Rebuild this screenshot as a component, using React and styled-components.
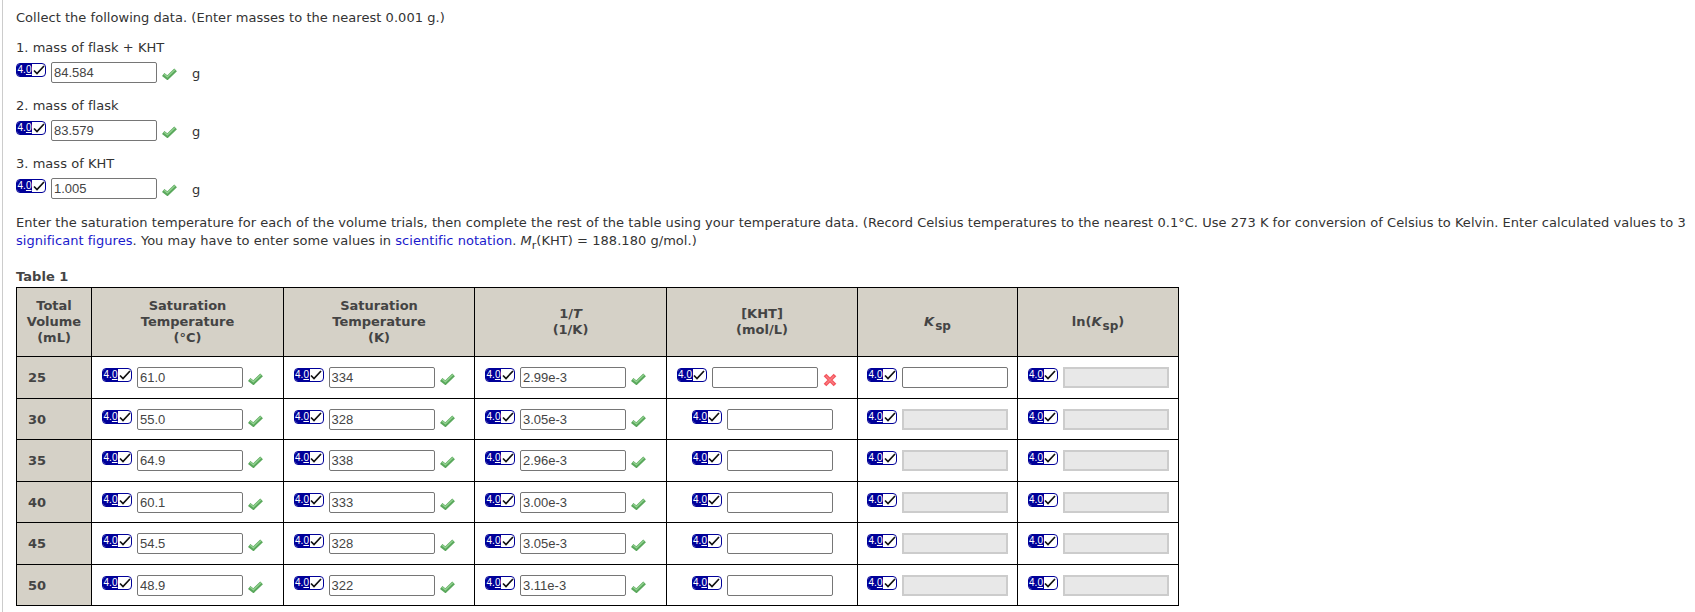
import React from 'react'
import styled, { createGlobalStyle } from 'styled-components'

const GlobalStyle = createGlobalStyle`
    html, body {
        margin: 0;
        padding: 0;
        background: #fff;
    }
`

const rows = [
    { vol: 25, c: '61.0', k: '334', inv: '2.99e-3', wrong: true },
    { vol: 30, c: '55.0', k: '328', inv: '3.05e-3' },
    { vol: 35, c: '64.9', k: '338', inv: '2.96e-3' },
    { vol: 40, c: '60.1', k: '333', inv: '3.00e-3' },
    { vol: 45, c: '54.5', k: '328', inv: '3.05e-3' },
    { vol: 50, c: '48.9', k: '322', inv: '3.11e-3' },
]

const masses = [
    { label: '1. mass of flask + KHT', value: '84.584' },
    { label: '2. mass of flask', value: '83.579' },
    { label: '3. mass of KHT', value: '1.005' },
]

function Badge() {
    return (
        <BadgeWrap>
            <BadgeScore>4.<u>0</u></BadgeScore>
            <BadgeTick>
                <svg width="12" height="10" viewBox="0 0 12 10">
                    <path d="M1 5.5 L4 8.5 L11 1" fill="none" stroke="#111" strokeWidth="1.7" />
                </svg>
            </BadgeTick>
        </BadgeWrap>
    )
}

function Correct() {
    return (
        <StatusIcon>
            <svg width="15" height="12" viewBox="0 0 15 12">
                <path d="M1.2 6.4 L5.4 9.8 L13.6 1.8" fill="none" stroke="#5aa85c" strokeWidth="3.8" />
                <path d="M2.2 6.2 L5.4 8.8 L13 1.6" fill="none" stroke="#93d291" strokeWidth="1.3" />
            </svg>
        </StatusIcon>
    )
}

function Wrong() {
    return (
        <StatusIcon>
            <svg width="14" height="14" viewBox="0 0 14 14">
                <path d="M2 2 L12 12 M12 2 L2 12" fill="none" stroke="#f4565e" strokeWidth="3.8" />
                <path d="M3 3 L11 11 M11 3 L3 11" fill="none" stroke="#fb7d82" strokeWidth="1.2" />
            </svg>
        </StatusIcon>
    )
}

function Answer({ value, status, disabled }) {
    return (
        <AnswerWrap>
            <Badge />
            <Field value={value || ''} disabled={disabled} readOnly />
            {status === 'ok' && <Correct />}
            {status === 'bad' && <Wrong />}
        </AnswerWrap>
    )
}

export default function App() {
    return (
        <Page>
            <GlobalStyle />
            <Text>Collect the following data. (Enter masses to the nearest 0.001 g.)</Text>
            {masses.map(m => (
                <MassGroup key={m.label}>
                    <Text>{m.label}</Text>
                    <MassRow>
                        <Answer value={m.value} status="ok" />
                        <Unit>g</Unit>
                    </MassRow>
                </MassGroup>
            ))}
            <Intro>
                Enter the saturation temperature for each of the volume trials, then complete the rest of the table using your temperature data. (Record Celsius temperatures to the nearest 0.1°C. Use 273 K for conversion of Celsius to Kelvin. Enter calculated values to 3
                <br />
                <a href="#sig">significant figures</a>. You may have to enter some values in <a href="#sci">scientific notation</a>. <i>M</i><sub>r</sub>(KHT) = 188.180 g/mol.)
            </Intro>
            <Caption>Table 1</Caption>
            <DataTable>
                <colgroup>
                    <Col $w={75} />
                    <Col $w={192} />
                    <Col $w={191} />
                    <Col $w={192} />
                    <Col $w={191} />
                    <Col $w={160} />
                    <Col $w={161} />
                </colgroup>
                <thead>
                    <tr>
                        <Head>Total<br />Volume<br />(mL)</Head>
                        <Head>Saturation<br />Temperature<br />(°C)</Head>
                        <Head>Saturation<br />Temperature<br />(K)</Head>
                        <Head>1/<i>T</i><br />(1/K)</Head>
                        <Head>[KHT]<br />(mol/L)</Head>
                        <Head><i>K</i><sub>sp</sub></Head>
                        <Head>ln(<i>K</i><sub>sp</sub>)</Head>
                    </tr>
                </thead>
                <tbody>
                    {rows.map(r => (
                        <BodyRow key={r.vol}>
                            <RowHead>{r.vol}</RowHead>
                            <Cell><Answer value={r.c} status="ok" /></Cell>
                            <Cell><Answer value={r.k} status="ok" /></Cell>
                            <Cell><Answer value={r.inv} status="ok" /></Cell>
                            <Cell><Answer status={r.wrong ? 'bad' : null} /></Cell>
                            <Cell><Answer disabled={!r.wrong} /></Cell>
                            <Cell><Answer disabled /></Cell>
                        </BodyRow>
                    ))}
                </tbody>
            </DataTable>
        </Page>
    )
}

const Page = styled.div`
    box-sizing: border-box;
    height: 612px;
    overflow: hidden;
    margin-left: 2px;
    border-left: 1px solid #ccc;
    padding: 9px 0 0 13px;
    font-family: "DejaVu Sans", Verdana, sans-serif;
    font-size: 13px;
    line-height: 17px;
    letter-spacing: 0.04px;
    color: #333;
`

const Text = styled.div`
    white-space: nowrap;
`

const MassGroup = styled.div`
    margin-top: 13px;
    & + & {
        margin-top: 14px;
    }
`

const MassRow = styled.div`
    display: flex;
    align-items: center;
    margin-top: 6px;
`

const Unit = styled.span`
    margin-left: 5px;
    position: relative;
    top: 1px;
`

const Intro = styled.div`
    margin-top: 15px;
    white-space: nowrap;
    line-height: 18px;

    a {
        color: #1a1acc;
        text-decoration: none;
    }
    sub {
        font-size: 11px;
        line-height: 0;
    }
`

const Caption = styled.div`
    margin-top: 19px;
    font-weight: bold;
    font-size: 13px;
    line-height: 16px;
    color: #444;
`

const DataTable = styled.table`
    border-collapse: collapse;
    table-layout: fixed;
    width: 1162px;
    margin-top: 2px;
    letter-spacing: 0;
`

const Col = styled.col`
    width: ${p => p.$w}px;
`

const Head = styled.th`
    height: 68px;
    padding: 0;
    border: 1px solid #000;
    background: #d5d1c7;
    color: #444;
    font-size: 13px;
    line-height: 16px;
    font-weight: bold;
    text-align: center;

    sub {
        margin-left: 1px;
        font-size: 12px;
        line-height: 0;
    }
`

const BodyRow = styled.tr`
    & > * {
        height: 40px;
    }
    &:nth-child(odd) > * {
        height: 41px;
    }
`

const RowHead = styled.th`
    padding: 0 0 0 11px;
    border: 1px solid #000;
    background: #d5d1c7;
    color: #444;
    font-size: 13px;
    font-weight: bold;
    text-align: left;
`

const Cell = styled.td`
    padding: 0;
    border: 1px solid #000;
    text-align: center;
`

const AnswerWrap = styled.span`
    display: inline-flex;
    align-items: flex-start;
    vertical-align: middle;
    text-align: left;
`

const BadgeWrap = styled.span`
    display: inline-flex;
    box-sizing: border-box;
    width: 30px;
    height: 14px;
    margin-top: 1px;
    border: 1px solid #000099;
    border-radius: 4px;
    background: #fff;
    overflow: hidden;
`

const BadgeScore = styled.span`
    width: 15px;
    background: #000099;
    color: #fff;
    font-family: "Liberation Sans", Arial, sans-serif;
    font-size: 10px;
    line-height: 11px;
    text-align: center;
    white-space: nowrap;
`

const BadgeTick = styled.span`
    display: flex;
    flex: 1;
    align-items: center;
    justify-content: center;
    svg {
        display: block;
    }
`

const Field = styled.input`
    box-sizing: border-box;
    width: 106px;
    height: 21px;
    margin: 0 0 0 5px;
    padding: 1px 2px;
    border: 1px solid #767676;
    border-radius: 2px;
    background: #fff;
    color: #444;
    font-family: "Liberation Sans", Arial, sans-serif;
    font-size: 13px;
    outline: none;

    &:disabled {
        border: 2px solid #ccc;
        border-radius: 0;
        background: #e8e8e8;
    }
`

const StatusIcon = styled.span`
    display: flex;
    justify-content: center;
    width: 15px;
    margin: 6px 10px 0 5px;
    svg {
        display: block;
    }
`
